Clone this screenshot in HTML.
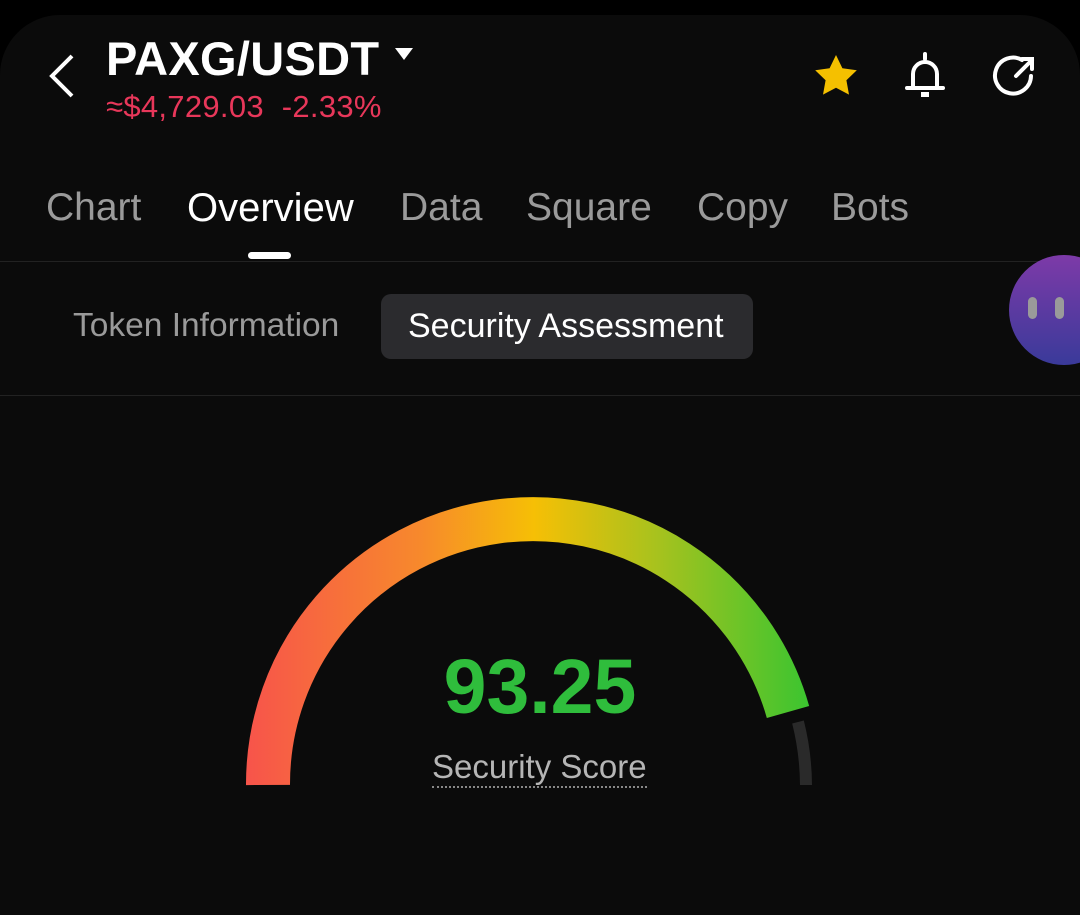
<!DOCTYPE html>
<html><head><meta charset="utf-8"><style>
body{margin:0;width:1080px;height:836px;background:#000;overflow:hidden;font-family:"Liberation Sans",sans-serif;position:relative}
.panel{position:absolute;left:0;top:15px;width:1080px;height:900px;background:#0b0b0b;border-radius:60px 60px 0 0}
.a{position:absolute;white-space:nowrap}
</style></head><body>
<div class="panel"></div>
<svg class="a" style="left:44px;top:52px" width="34" height="48"><path d="M28 4 L8 24 L28 44" stroke="#fff" stroke-width="4" fill="none"/></svg>
<div class="a" style="left:106px;top:31px;font-size:47px;font-weight:bold;color:#fff;letter-spacing:0.3px">PAXG/USDT</div>
<svg class="a" style="left:393px;top:46px" width="22" height="16"><path d="M2 2 L20 2 L11 14Z" fill="#fff"/></svg>
<div class="a" style="left:106px;top:89px;font-size:31px;color:#e8375a;letter-spacing:0.3px">≈$4,729.03&nbsp;&nbsp;-2.33%</div>
<svg class="a" style="left:810px;top:52px" width="52" height="48" viewBox="0 0 24 24"><path d="M12 1.5l3.2 6.6 7.2 1-5.2 5 1.3 7.2L12 17.9l-6.5 3.4 1.3-7.2-5.2-5 7.2-1z" fill="#f5c000"/></svg>
<svg class="a" style="left:900px;top:50px" width="50" height="52" viewBox="0 0 50 52"><path d="M25 4v5M13 38V24a12 12 0 0 1 24 0v14M7 38h36" stroke="#fff" stroke-width="4" fill="none" stroke-linecap="round"/><rect x="21" y="42" width="8" height="5" fill="#fff"/></svg>
<svg class="a" style="left:988px;top:52px" width="52" height="50" viewBox="0 0 52 50"><path d="M34 8A18 18 0 1 0 43 24" stroke="#fff" stroke-width="4" fill="none" stroke-linecap="round"/><path d="M28 24L44 8M34 7h10v10" stroke="#fff" stroke-width="4" fill="none" stroke-linecap="round"/></svg>
<div class="a" style="top:186px;left:46px;font-size:39px;color:#9a9a9a">Chart</div>
<div class="a" style="top:186px;left:187px;font-size:40px;color:#fff">Overview</div>
<div class="a" style="top:186px;left:400px;font-size:39px;color:#9a9a9a">Data</div>
<div class="a" style="top:186px;left:526px;font-size:39px;color:#9a9a9a">Square</div>
<div class="a" style="top:186px;left:697px;font-size:39px;color:#9a9a9a">Copy</div>
<div class="a" style="top:186px;left:831px;font-size:39px;color:#9a9a9a">Bots</div>
<div class="a" style="left:248px;top:252px;width:43px;height:7px;border-radius:4px;background:#fff"></div>
<div class="a" style="left:0;top:261px;width:1080px;height:1px;background:#222"></div>
<div class="a" style="top:307px;left:73px;font-size:33.5px;color:#9a9a9a">Token Information</div>
<div class="a" style="top:294px;left:381px;width:372px;height:65px;border-radius:10px;background:#2b2b2e"></div>
<div class="a" style="top:307px;left:408px;font-size:34px;color:#fff">Security Assessment</div>
<div class="a" style="left:1009px;top:255px;width:110px;height:110px;border-radius:55px;background:linear-gradient(#7d3aa8,#3a3a9a)"></div>
<div class="a" style="left:1028px;top:297px;width:9px;height:22px;border-radius:5px;background:#9a9a9a"></div>
<div class="a" style="left:1055px;top:297px;width:9px;height:22px;border-radius:5px;background:#9a9a9a"></div>
<div class="a" style="left:0;top:395px;width:1080px;height:1px;background:#222"></div>
<svg class="a" style="left:0;top:0" width="1080" height="836">
<defs><linearGradient id="g" x1="250" y1="0" x2="818" y2="0" gradientUnits="userSpaceOnUse">
<stop offset="0" stop-color="#f7554a"/><stop offset="0.3" stop-color="#f7892c"/><stop offset="0.5" stop-color="#f6bf05"/><stop offset="0.72" stop-color="#a6c21e"/><stop offset="1" stop-color="#35c531"/></linearGradient></defs>
<path d="M268 785 A265 265 0 0 1 788 712" stroke="url(#g)" stroke-width="44" fill="none"/>
<path d="M798 722 A265 265 0 0 1 806 785" stroke="#2a2a2a" stroke-width="12" fill="none"/>
</svg>
<div class="a" style="left:0;width:1080px;text-align:center;top:643px;font-size:77px;font-weight:bold;color:#2fbd3c">93.25</div>
<div class="a" style="left:432px;top:747px;font-size:33px;color:#b5b5b5;border-bottom:2px dotted #888;line-height:39px">Security Score</div>
</body></html>
